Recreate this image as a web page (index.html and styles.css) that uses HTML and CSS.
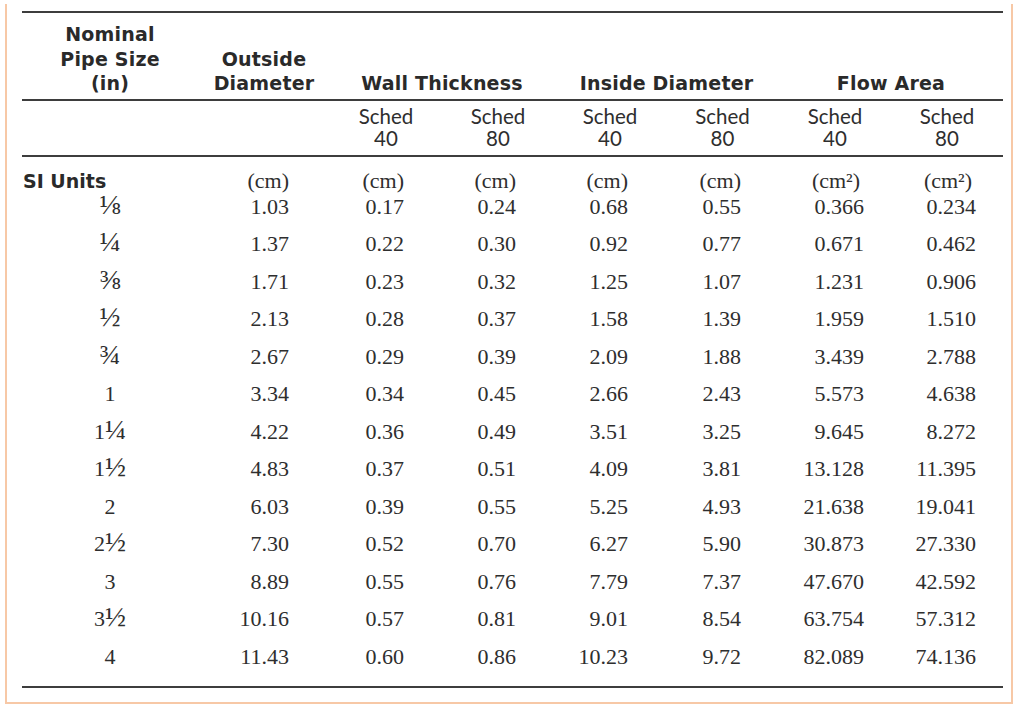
FILE: index.html
```html
<!DOCTYPE html>
<html lang="en">
<head>
<meta charset="utf-8">
<title>Pipe dimensions</title>
<link rel="stylesheet" href="styles.css">
</head>
<body>
<div class="sheet">
  <div class="table">
    <div class="head1 cols">
      <div class="h c1">Nominal<br>Pipe Size<br>(in)</div>
      <div class="h c2">Outside<br>Diameter</div>
      <div class="h span2">Wall Thickness</div>
      <div class="h span2">Inside Diameter</div>
      <div class="h span2">Flow Area</div>
    </div>
    <div class="head2 cols">
      <div></div><div></div>
      <div class="sched">Sched<br>40</div>
      <div class="sched">Sched<br>80</div>
      <div class="sched">Sched<br>40</div>
      <div class="sched">Sched<br>80</div>
      <div class="sched">Sched<br>40</div>
      <div class="sched">Sched<br>80</div>
    </div>
    <div class="body">
      <div class="units cols row">
        <div class="si">SI Units</div>
        <div>(cm)</div><div>(cm)</div><div>(cm)</div><div>(cm)</div><div>(cm)</div><div>(cm²)</div><div>(cm²)</div>
      </div>
      <div class="data">
        <div class="cols row"><div><span class="fr">⅛</span></div><div>1.03</div><div>0.17</div><div>0.24</div><div>0.68</div><div>0.55</div><div>0.366</div><div>0.234</div></div>
        <div class="cols row"><div><span class="fr">¼</span></div><div>1.37</div><div>0.22</div><div>0.30</div><div>0.92</div><div>0.77</div><div>0.671</div><div>0.462</div></div>
        <div class="cols row"><div><span class="fr">⅜</span></div><div>1.71</div><div>0.23</div><div>0.32</div><div>1.25</div><div>1.07</div><div>1.231</div><div>0.906</div></div>
        <div class="cols row"><div><span class="fr">½</span></div><div>2.13</div><div>0.28</div><div>0.37</div><div>1.58</div><div>1.39</div><div>1.959</div><div>1.510</div></div>
        <div class="cols row"><div><span class="fr">¾</span></div><div>2.67</div><div>0.29</div><div>0.39</div><div>2.09</div><div>1.88</div><div>3.439</div><div>2.788</div></div>
        <div class="cols row"><div>1</div><div>3.34</div><div>0.34</div><div>0.45</div><div>2.66</div><div>2.43</div><div>5.573</div><div>4.638</div></div>
        <div class="cols row"><div>1<span class="fr">¼</span></div><div>4.22</div><div>0.36</div><div>0.49</div><div>3.51</div><div>3.25</div><div>9.645</div><div>8.272</div></div>
        <div class="cols row"><div>1<span class="fr">½</span></div><div>4.83</div><div>0.37</div><div>0.51</div><div>4.09</div><div>3.81</div><div>13.128</div><div>11.395</div></div>
        <div class="cols row"><div>2</div><div>6.03</div><div>0.39</div><div>0.55</div><div>5.25</div><div>4.93</div><div>21.638</div><div>19.041</div></div>
        <div class="cols row"><div>2<span class="fr">½</span></div><div>7.30</div><div>0.52</div><div>0.70</div><div>6.27</div><div>5.90</div><div>30.873</div><div>27.330</div></div>
        <div class="cols row"><div>3</div><div>8.89</div><div>0.55</div><div>0.76</div><div>7.79</div><div>7.37</div><div>47.670</div><div>42.592</div></div>
        <div class="cols row"><div>3<span class="fr">½</span></div><div>10.16</div><div>0.57</div><div>0.81</div><div>9.01</div><div>8.54</div><div>63.754</div><div>57.312</div></div>
        <div class="cols row"><div>4</div><div>11.43</div><div>0.60</div><div>0.86</div><div>10.23</div><div>9.72</div><div>82.089</div><div>74.136</div></div>
      </div>
    </div>
  </div>
</div>
</body>
</html>
```

FILE: styles.css
```css
html, body {
  margin: 0;
  padding: 0;
  background: #ffffff;
}

.sheet {
  margin: 4px 0 0 5px;
  width: 1008px;
  height: 700px;
  box-sizing: border-box;
  border: 2px solid #f7c8a6;
  border-top: 0;
  padding: 7px 8px 0 15px;
}

.table {
  border-top: 2px solid #3d3d3d;
  border-bottom: 2px solid #3d3d3d;
  color: #2e2e2e;
}

.cols {
  display: grid;
  grid-template-columns: 176px 132px 112px 112px 112px 113px 112px 112px;
}

.head1 {
  align-items: end;
  padding: 9.2px 0 3.3px;
  border-bottom: 2px solid #3d3d3d;
}

.h {
  font-family: "DejaVu Sans", sans-serif;
  font-weight: bold;
  font-size: 19px;
  line-height: 24.5px;
  text-align: center;
  color: #2a2a2a;
  letter-spacing: 0.2px;
}

.span2 {
  grid-column: span 2;
}

.head2 {
  padding: 4.3px 0 5.7px;
  border-bottom: 2px solid #3d3d3d;
}

.sched {
  font-family: "Lato", sans-serif;
  font-size: 20.5px;
  line-height: 22px;
  text-align: center;
  color: #2e2e2e;
}

.body {
  padding: 11.6px 0 17.4px;
  font-family: "Liberation Serif", serif;
  font-size: 22px;
}

.row {
  line-height: 24px;
}

.units {
  align-items: baseline;
  margin-bottom: 2px;
}

.data {
  display: flex;
  flex-direction: column;
  gap: 13.5px;
}

.row > div {
  text-align: right;
  padding-right: 38px;
}

.row > div:nth-child(1) {
  text-align: center;
  padding-right: 0;
}

.row > div:nth-child(2) {
  padding-right: 41px;
}

.row > div:nth-child(7),
.row > div:nth-child(8) {
  padding-right: 27px;
}

.units > div:nth-child(7),
.units > div:nth-child(8) {
  padding-right: 31px;
}

.fr {
  font-size: 28px;
  line-height: 0;
}

.row.units > div.si {
  text-align: left;
  font-family: "DejaVu Sans", sans-serif;
  font-weight: bold;
  font-size: 19px;
  color: #2a2a2a;
  padding-left: 1px;
}
```
